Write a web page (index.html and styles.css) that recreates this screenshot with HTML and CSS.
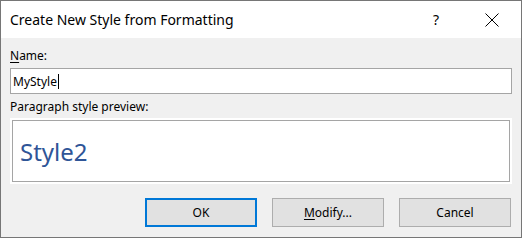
FILE: index.html
```html
<!DOCTYPE html>
<html lang="en">
<head>
    <meta charset="UTF-8">
    <meta name="viewport" content="width=device-width, initial-scale=1.0">
    <title>Create New Style from Formatting</title>
    <link rel="stylesheet" href="styles.css">
</head>
<body>
    <div class="dialog">
        <header class="titlebar">
            <span class="title">Create New Style from Formatting</span>
            <span class="help">?</span>
            <span class="close">
                <svg width="14" height="14" viewBox="0 0 14 14">
                    <path d="M0.5 0.5 L13.5 13.5 M13.5 0.5 L0.5 13.5" stroke="#000" stroke-width="1" fill="none"/>
                </svg>
            </span>
        </header>

        <div class="content">
            <label class="field-label"><u>N</u>ame:</label>
            <div class="textbox">MyStyle<span class="caret"></span></div>

            <label class="field-label preview-label">Paragraph style preview:</label>
            <div class="preview">
                <div class="preview-inner">Style2</div>
            </div>

            <div class="buttons">
                <button class="btn default">OK</button>
                <button class="btn"><u>M</u>odify...</button>
                <button class="btn">Cancel</button>
            </div>
        </div>
    </div>
</body>
</html>
```

FILE: styles.css
```css
/* Basic styling */
body {
    margin: 0;
    padding: 0;
    font-family: "Noto Sans", "Open Sans", Arial, sans-serif;
    background-color: #fff;
}
.dialog {
    width: 522px;
    height: 238px;
    box-sizing: border-box;
    border: 1px solid #767676;
    background-color: #f0f0f0;
    display: flex;
    flex-direction: column;
}
/* Title bar */
.titlebar {
    height: 37px;
    background-color: #fff;
    display: flex;
    align-items: center;
    padding-left: 9px;
}
.title {
    font-size: 14px;
    color: #000;
    flex: 1;
}
.help {
    font-size: 14px;
    margin-right: 46px;
    color: #000;
}
.close {
    width: 14px;
    height: 14px;
    margin-right: 22px;
    display: flex;
}
/* Content */
.content {
    padding: 10px 9px 10px 9px;
    display: flex;
    flex-direction: column;
}
.field-label {
    font-size: 12px;
    line-height: 16px;
    color: #000;
}
.field-label u {
    text-decoration-thickness: 1px;
    text-underline-offset: 2px;
}
.textbox {
    margin-top: 4px;
    height: 26px;
    box-sizing: border-box;
    border: 1px solid #a5a5a5;
    background-color: #fff;
    font-size: 12px;
    display: flex;
    align-items: center;
    padding-left: 2px;
}
.caret {
    display: inline-block;
    width: 1px;
    height: 15px;
    background-color: #000;
    margin-left: 1px;
}
.preview-label {
    margin-top: 5px;
}
.preview {
    margin-top: 3px;
    height: 66px;
    box-sizing: border-box;
    border: 2px solid #fff;
}
.preview-inner {
    height: 100%;
    box-sizing: border-box;
    border: 1px solid #a5a5a5;
    background-color: #fff;
    color: #2f5597;
    font-size: 24px;
    padding-left: 7px;
    display: flex;
    align-items: center;
}
/* Buttons */
.buttons {
    margin-top: 14px;
    display: flex;
    justify-content: flex-end;
    gap: 15px;
    padding-right: 1px;
}
.btn {
    width: 112px;
    height: 29px;
    box-sizing: border-box;
    border: 1px solid #adadad;
    background-color: #e1e1e1;
    font-family: "Noto Sans", "Open Sans", Arial, sans-serif;
    font-size: 12px;
    color: #000;
    padding: 0;
}
.btn u {
    text-decoration-thickness: 1px;
    text-underline-offset: 2px;
}
.btn.default {
    border: 2px solid #0078d7;
}
```
